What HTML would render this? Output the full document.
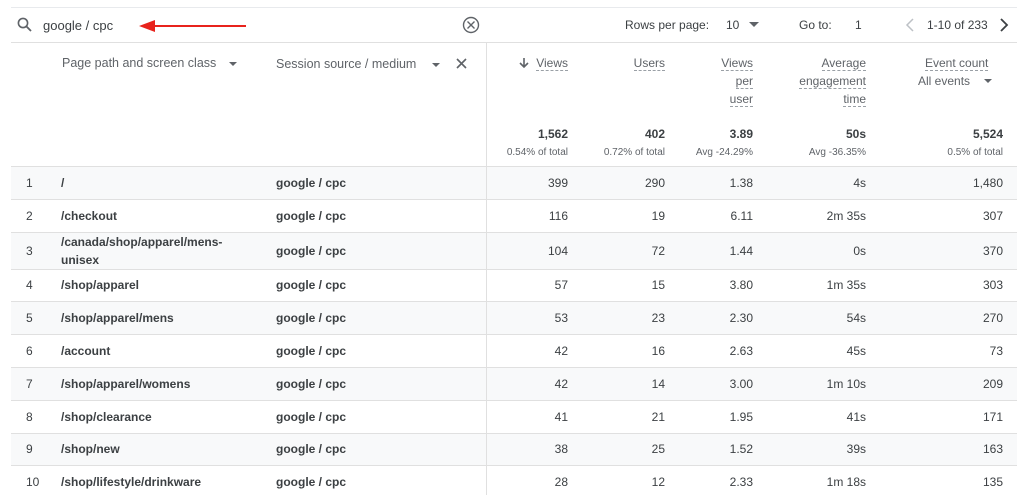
<!DOCTYPE html>
<html><head><style>
body{margin:0;width:1024px;height:495px;background:#fff;font-family:"Liberation Sans",Arial,sans-serif;color:#202124;position:relative;overflow:hidden}
.a{position:absolute;white-space:nowrap}
.hl{position:absolute;left:11px;width:1006px;height:1px;background:#e0e0e0}
.r{position:absolute;left:11px;width:1006px}
.g{color:#5f6368}
.n{font-size:12px;text-align:right;line-height:16px}
.d{border-bottom:1px dashed #9aa0a6;}
.s{font-size:10px;color:#5f6368;text-align:right}
.b{font-size:12px;font-weight:bold;color:#3c4043;line-height:16px}
</style></head><body>
<div class="hl" style="top:7px;background:#e8eaed"></div>
<svg class="a" style="left:16px;top:16px" width="18" height="18" viewBox="0 0 18 18"><circle cx="7" cy="7" r="4.6" fill="none" stroke="#5f6368" stroke-width="1.6"/><path d="M10.4 10.4L15 15" stroke="#5f6368" stroke-width="1.8"/></svg>
<div class="a" style="left:43px;top:18px;font-size:13px;color:#3c4043">google / cpc</div>
<svg class="a" style="left:138px;top:19px" width="110" height="14"><path d="M1 7L17 1V13Z" fill="#e8231c"/><path d="M14 7H108" stroke="#e8231c" stroke-width="2"/></svg>
<svg class="a" style="left:462px;top:16px" width="18" height="18"><circle cx="9" cy="9" r="7.5" fill="none" stroke="#5f6368" stroke-width="1.4"/><path d="M5.5 5.5L12.5 12.5M12.5 5.5L5.5 12.5" stroke="#5f6368" stroke-width="1.4"/></svg>
<div class="a g" style="left:625px;top:18px;font-size:12px;color:#3c4043">Rows per page:</div>
<div class="a" style="left:726px;top:18px;font-size:12px;color:#3c4043">10</div>
<svg class="a" style="left:749px;top:22px" width="10" height="6"><path d="M0 0H10L5 5Z" fill="#5f6368"/></svg>
<div class="a" style="left:799px;top:18px;font-size:12px;color:#3c4043">Go to:</div>
<div class="a" style="left:855px;top:18px;font-size:12px;color:#3c4043">1</div>
<svg class="a" style="left:904px;top:17px" width="12" height="16"><path d="M9 2L3 8L9 14" fill="none" stroke="#bdc1c6" stroke-width="1.5"/></svg>
<div class="a" style="left:927px;top:18px;font-size:12px;color:#3c4043">1-10 of 233</div>
<svg class="a" style="left:998px;top:17px" width="12" height="16"><path d="M3 2L9 8L3 14" fill="none" stroke="#3c4043" stroke-width="1.8"/></svg>
<div class="hl" style="top:42px"></div>
<div class="a g" style="left:62px;top:56px;font-size:12.5px">Page path and screen class</div>
<svg class="a" style="left:229px;top:62px" width="8" height="5"><path d="M0 0H8L4 4Z" fill="#5f6368"/></svg>
<div class="a g" style="left:276px;top:57px;font-size:12.5px">Session source / medium</div>
<svg class="a" style="left:432px;top:63px" width="8" height="5"><path d="M0 0H8L4 4Z" fill="#5f6368"/></svg>
<svg class="a" style="left:456px;top:58px" width="11" height="11"><path d="M1 1L10 10M10 1L1 10" stroke="#5f6368" stroke-width="1.6"/></svg>
<svg class="a" style="left:519px;top:57px" width="10" height="12"><path d="M5 1V10M1 6L5 10L9 6" fill="none" stroke="#5f6368" stroke-width="1.6"/></svg>
<div class="a g" style="right:456px;top:54px;font-size:12px;line-height:18px"><span class="d">Views</span></div>
<div class="a g" style="right:359px;top:54px;font-size:12px;line-height:18px"><span class="d">Users</span></div>
<div class="a g" style="right:271px;top:54px;font-size:12px;text-align:right;line-height:18px"><span class="d">Views</span><br><span class="d">per</span><br><span class="d">user</span></div>
<div class="a g" style="right:158px;top:54px;font-size:12px;text-align:right;line-height:18px"><span class="d">Average</span><br><span class="d">engagement</span><br><span class="d">time</span></div>
<div class="a g" style="left:925px;top:54px;font-size:12px;line-height:18px"><span class="d">Event count</span></div>
<div class="a g" style="left:918px;top:72px;font-size:12px;line-height:18px">All events</div>
<svg class="a" style="left:984px;top:79px" width="8" height="5"><path d="M0 0H8L4 4Z" fill="#5f6368"/></svg>
<div class="a b" style="right:456px;top:126px">1,562</div>
<div class="a b" style="right:359px;top:126px">402</div>
<div class="a b" style="right:271px;top:126px">3.89</div>
<div class="a b" style="right:158px;top:126px">50s</div>
<div class="a b" style="right:21px;top:126px">5,524</div>
<div class="a s" style="right:456px;top:147px">0.54% of total</div>
<div class="a s" style="right:359px;top:147px">0.72% of total</div>
<div class="a s" style="right:271px;top:147px">Avg -24.29%</div>
<div class="a s" style="right:158px;top:147px">Avg -36.35%</div>
<div class="a s" style="right:21px;top:147px">0.5% of total</div>
<div id="rows"></div>
<script>
var R=[["1","/","399","290","1.38","4s","1,480",166,199],
["2","/checkout","116","19","6.11","2m 35s","307",199,232],
["3","/canada/shop/apparel/mens-<br>unisex","104","72","1.44","0s","370",232,269],
["4","/shop/apparel","57","15","3.80","1m 35s","303",269,301],
["5","/shop/apparel/mens","53","23","2.30","54s","270",301,334],
["6","/account","42","16","2.63","45s","73",334,367],
["7","/shop/apparel/womens","42","14","3.00","1m 10s","209",367,400],
["8","/shop/clearance","41","21","1.95","41s","171",400,433],
["9","/shop/new","38","25","1.52","39s","163",433,465],
["10","/shop/lifestyle/drinkware","28","12","2.33","1m 18s","135",465,498]];
var h="";R.forEach(function(r,i){var t=r[7],H=r[8]-r[7],c=t+H/2-8;
h+='<div class="r" style="top:'+t+'px;height:'+H+'px;background:'+(i%2==0?'#f8f9fa':'#fff')+';border-top:1px solid #e0e0e0"></div>';
h+='<div class="a" style="left:26px;top:'+c+'px;font-size:12px;color:#3c4043;line-height:16px">'+r[0]+'</div>';
h+='<div class="a b" style="left:61px;top:'+(i==2?t+1:c)+'px;line-height:'+(i==2?'18px':'16px')+'">'+r[1]+'</div>';
h+='<div class="a b" style="left:276px;top:'+c+'px">google / cpc</div>';
var rs=[456,359,271,158,21];for(var k=0;k<5;k++)h+='<div class="a n" style="right:'+rs[k]+'px;top:'+c+'px;color:#3c4043">'+r[2+k]+'</div>';});
document.getElementById("rows").innerHTML=h;
</script>
<div class="a" style="left:486px;top:42px;width:1px;height:453px;background:#e0e0e0"></div>
</body></html>
